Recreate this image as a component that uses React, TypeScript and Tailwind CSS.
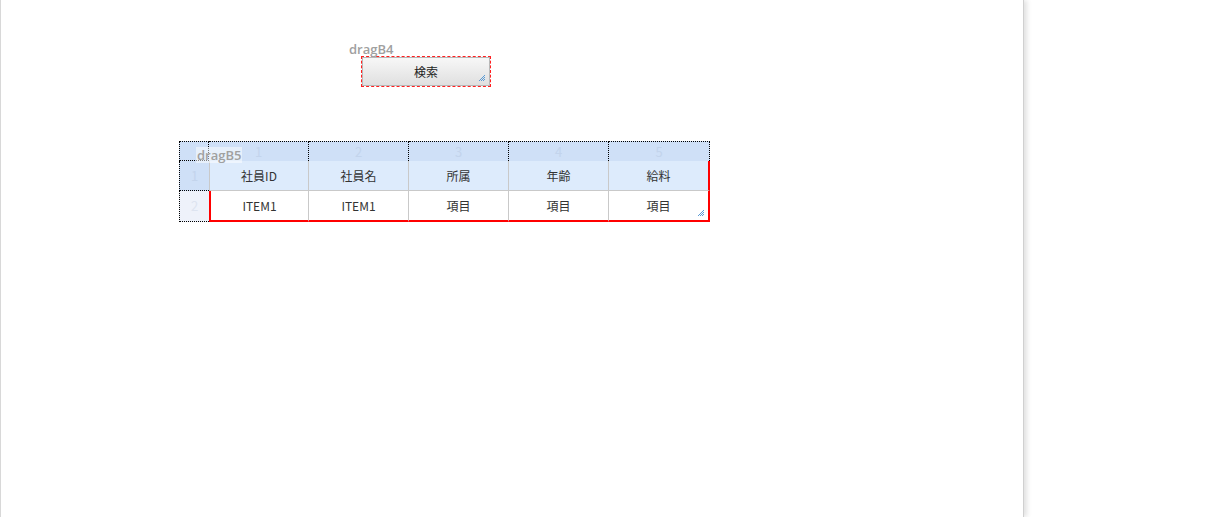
const font = { fontFamily: '"Noto Sans CJK JP", "Liberation Sans", sans-serif' };
const labelFont = { fontFamily: '"Open Sans", "Liberation Sans", sans-serif' };

const ResizeGrip = () => (
  <svg width="8" height="8" viewBox="0 0 8 8" className="absolute right-[3px] bottom-[3px]">
    <path d="M7 1 L1 7 M7 3 L3 7 M7 5 L5 7" stroke="#5b9bd5" strokeWidth="1" />
  </svg>
);

const columns = ['社員ID', '社員名', '所属', '年齢', '給料'];
const values = ['ITEM1', 'ITEM1', '項目', '項目', '項目'];

const SearchButton = () => (
  <div className="absolute left-[348px] top-[42px]">
    <div className="text-[13px] font-semibold leading-[14px] text-[#a0a0a0]" style={labelFont}>
      dragB4
    </div>
    <div className="ml-[12px] w-[130px] h-[31px] border border-dashed border-[#ff2020]">
      <div
        className="relative flex items-center justify-center h-full border border-[#b8b8b8] bg-gradient-to-b from-[#f7f7f7] to-[#e0e0e0] text-[12px] text-[#222]"
        style={font}
      >
        検索
        <ResizeGrip />
      </div>
    </div>
  </div>
);

const DataGrid = () => (
  <div className="absolute left-[178px] top-[141px]" style={font}>
    <div className="grid grid-cols-[30px_100px_100px_100px_100px_101px] grid-rows-[20px_30px_31px] text-[12px]">
      <div className="bg-[#cfe0f7] border border-dotted border-black" />
      {columns.map((_, i) => (
        <div
          key={`n${i}`}
          className="flex items-center justify-center bg-[#cfe0f7] text-[13px] text-[#c3d4ec] border-t border-r border-dotted border-black"
        >
          {i + 1}
        </div>
      ))}
      <div className="flex items-center justify-center bg-[#cfe0f7] text-[13px] text-[#c3d4ec] border-l border-b border-dotted border-black">
        1
      </div>
      {columns.map((c, i) => (
        <div
          key={c}
          className={`flex items-center justify-center bg-[#ddebfc] text-[#333] border-b border-[#c9c9c9] ${i === 0 ? 'border-l border-l-[#c9c9c9]' : ''} ${i < 4 ? 'border-r border-r-[#c9c9c9]' : 'border-r-2 border-r-[#ff0000]'}`}
        >
          {c}
        </div>
      ))}
      <div className="flex items-center justify-center bg-[#eef2fa] text-[13px] text-[#dde4f0] border-l border-b border-dotted border-black">
        2
      </div>
      {values.map((v, i) => (
        <div
          key={`v${i}`}
          className={`relative flex items-center justify-center bg-white text-[#333] border-b-2 border-b-[#ff0000] ${i === 0 ? 'border-l-2 border-l-[#ff0000]' : ''} ${i < 4 ? 'border-r border-r-[#c9c9c9]' : 'border-r-2 border-r-[#ff0000]'}`}
        >
          {v}
          {i === 4 && <ResizeGrip />}
        </div>
      ))}
    </div>
    <div
      className="absolute left-[17px] top-[6px] px-[1px] bg-white/50 text-[13px] font-semibold leading-[16px] text-[#a0a0a0]"
      style={labelFont}
    >
      dragB5
    </div>
  </div>
);

export default function App() {
  return (
    <div className="flex h-[517px] w-[1230px] bg-white overflow-hidden">
      <div className="relative w-[1024px] h-full border-l border-[#d8d8d8] border-r border-r-[#d0d0d0] shadow-[3px_0_5px_rgba(0,0,0,0.12)] bg-white">
        <SearchButton />
        <DataGrid />
      </div>
      <div className="flex-1" />
    </div>
  );
}
